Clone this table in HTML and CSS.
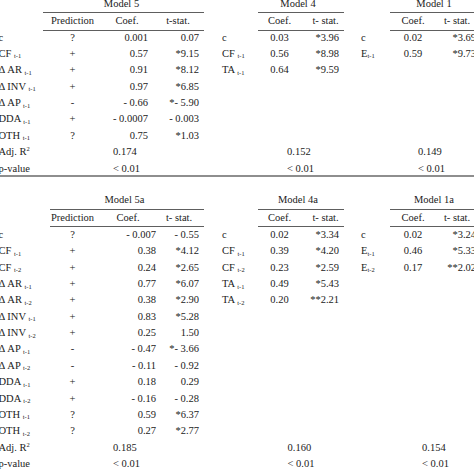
FILE: index.html
```html
<!DOCTYPE html>
<html>
<head>
<meta charset="utf-8">
<link rel="stylesheet" href="styles.css">
</head>
<body>
<div class="page">
  <div class="tbl tbl-top">
    <div class="row title">
      <div></div><div class="span3 line ttl t5">Model 5</div><div></div>
      <div></div><div class="span2 line ttl t4">Model 4</div><div></div>
      <div></div><div class="span2 line ttl t1">Model 1</div>
    </div>
    <div class="row head">
      <div></div><div class="line ctr">Prediction</div><div class="line ctr">Coef.</div><div class="line ctr">t-stat.</div><div></div>
      <div></div><div class="line ctr">Coef.</div><div class="line ctr hg">t- stat.</div><div></div>
      <div></div><div class="line ctr">Coef.</div><div class="line ctr">t- stat.</div>
    </div>
    <div class="row">
      <div class="lab">c</div><div class="ctr">?</div><div class="rc">0.001</div><div class="rt">0.07</div><div></div>
      <div>c</div><div class="ctr">0.03</div><div class="rt">*3.96</div><div></div>
      <div>c</div><div class="ctr">0.02</div><div class="rj">*3.69</div>
    </div>
    <div class="row">
      <div class="lab">CF <span class="sub">t-1</span></div><div class="ctr">+</div><div class="rc">0.57</div><div class="rt">*9.15</div><div></div>
      <div>CF <span class="sub">t-1</span></div><div class="ctr">0.56</div><div class="rt">*8.98</div><div></div>
      <div>E<span class="sub">t-1</span></div><div class="ctr">0.59</div><div class="rj">*9.73</div>
    </div>
    <div class="row">
      <div class="lab">Δ AR <span class="sub">t-1</span></div><div class="ctr">+</div><div class="rc">0.91</div><div class="rt">*8.12</div><div></div>
      <div>TA <span class="sub">t-1</span></div><div class="ctr">0.64</div><div class="rt">*9.59</div><div></div>
      <div></div><div></div><div></div>
    </div>
    <div class="row">
      <div class="lab">Δ INV <span class="sub">t-1</span></div><div class="ctr">+</div><div class="rc">0.97</div><div class="rt">*6.85</div>
    </div>
    <div class="row">
      <div class="lab">Δ AP <span class="sub">t-1</span></div><div class="ctr">-</div><div class="rc">- 0.66</div><div class="rt">*- 5.90</div>
    </div>
    <div class="row">
      <div class="lab">DDA <span class="sub">t-1</span></div><div class="ctr">+</div><div class="rc">- 0.0007</div><div class="rt">- 0.003</div>
    </div>
    <div class="row">
      <div class="lab">OTH <span class="sub">t-1</span></div><div class="ctr">?</div><div class="rc">0.75</div><div class="rt">*1.03</div>
    </div>
    <div class="row">
      <div class="lab">Adj. R<span class="sup">2</span></div><div></div><div class="span2 s5">0.174</div><div></div>
      <div></div><div class="span2 s4">0.152</div><div></div>
      <div></div><div class="span2 s1">0.149</div>
    </div>
    <div class="row last">
      <div class="lab">p-value</div><div></div><div class="span2 s5">&lt; 0.01</div><div></div>
      <div></div><div class="span2 s4">&lt; 0.01</div><div></div>
      <div></div><div class="span2 s1">&lt; 0.01</div>
    </div>
  </div>

  <div class="tbl tbl-bottom">
    <div class="row title">
      <div></div><div class="span3 line ttl t5b">Model 5a</div><div></div>
      <div></div><div class="span2 line ttl t4">Model 4a</div><div></div>
      <div></div><div class="span2 line ttl t1">Model 1a</div>
    </div>
    <div class="row head">
      <div></div><div class="line ctr pb">Prediction</div><div class="line ctr hc">Coef.</div><div class="line ctr hc">t- stat.</div><div></div>
      <div></div><div class="line ctr">Coef.</div><div class="line ctr hg">t- stat.</div><div></div>
      <div></div><div class="line ctr">Coef.</div><div class="line ctr">t- stat.</div>
    </div>
    <div class="row">
      <div class="lab">c</div><div class="ctr">?</div><div class="rc">- 0.007</div><div class="rt">- 0.55</div><div></div>
      <div>c</div><div class="ctr">0.02</div><div class="rt">*3.34</div><div></div>
      <div>c</div><div class="ctr">0.02</div><div class="rj">*3.24</div>
    </div>
    <div class="row">
      <div class="lab">CF <span class="sub">t-1</span></div><div class="ctr">+</div><div class="rc">0.38</div><div class="rt">*4.12</div><div></div>
      <div>CF <span class="sub">t-1</span></div><div class="ctr">0.39</div><div class="rt">*4.20</div><div></div>
      <div>E<span class="sub">t-1</span></div><div class="ctr">0.46</div><div class="rj">*5.33</div>
    </div>
    <div class="row">
      <div class="lab">CF <span class="sub">t-2</span></div><div class="ctr">+</div><div class="rc">0.24</div><div class="rt">*2.65</div><div></div>
      <div>CF <span class="sub">t-2</span></div><div class="ctr">0.23</div><div class="rt">*2.59</div><div></div>
      <div>E<span class="sub">t-2</span></div><div class="ctr">0.17</div><div class="rj">**2.02</div>
    </div>
    <div class="row">
      <div class="lab">Δ AR <span class="sub">t-1</span></div><div class="ctr">+</div><div class="rc">0.77</div><div class="rt">*6.07</div><div></div>
      <div>TA <span class="sub">t-1</span></div><div class="ctr">0.49</div><div class="rt">*5.43</div>
    </div>
    <div class="row">
      <div class="lab">Δ AR <span class="sub">t-2</span></div><div class="ctr">+</div><div class="rc">0.38</div><div class="rt">*2.90</div><div></div>
      <div>TA <span class="sub">t-2</span></div><div class="ctr">0.20</div><div class="rt">**2.21</div>
    </div>
    <div class="row">
      <div class="lab">Δ INV <span class="sub">t-1</span></div><div class="ctr">+</div><div class="rc">0.83</div><div class="rt">*5.28</div>
    </div>
    <div class="row">
      <div class="lab">Δ INV <span class="sub">t-2</span></div><div class="ctr">+</div><div class="rc">0.25</div><div class="rt">1.50</div>
    </div>
    <div class="row">
      <div class="lab">Δ AP <span class="sub">t-1</span></div><div class="ctr">-</div><div class="rc">- 0.47</div><div class="rt">*- 3.66</div>
    </div>
    <div class="row">
      <div class="lab">Δ AP <span class="sub">t-2</span></div><div class="ctr">-</div><div class="rc">- 0.11</div><div class="rt">- 0.92</div>
    </div>
    <div class="row">
      <div class="lab">DDA <span class="sub">t-1</span></div><div class="ctr">+</div><div class="rc">0.18</div><div class="rt">0.29</div>
    </div>
    <div class="row">
      <div class="lab">DDA <span class="sub">t-2</span></div><div class="ctr">+</div><div class="rc">- 0.16</div><div class="rt">- 0.28</div>
    </div>
    <div class="row">
      <div class="lab">OTH <span class="sub">t-1</span></div><div class="ctr">?</div><div class="rc">0.59</div><div class="rt">*6.37</div>
    </div>
    <div class="row">
      <div class="lab">OTH <span class="sub">t-2</span></div><div class="ctr">?</div><div class="rc">0.27</div><div class="rt">*2.77</div>
    </div>
    <div class="row">
      <div class="lab">Adj. R<span class="sup">2</span></div><div></div><div class="span2 s5">0.185</div><div></div>
      <div></div><div class="span2 s4b">0.160</div><div></div>
      <div></div><div class="span2 s1b">0.154</div>
    </div>
    <div class="row">
      <div class="lab">p-value</div><div></div><div class="span2 s5">&lt; 0.01</div><div></div>
      <div></div><div class="span2 s4b">&lt; 0.01</div><div></div>
      <div></div><div class="span2 s1b">&lt; 0.01</div>
    </div>
  </div>
</div>
</body>
</html>
```

FILE: styles.css
```css
html, body {
  margin: 0;
  padding: 0;
  background: #ffffff;
}

body {
  color: #222222;
  font-family: "Liberation Serif", "Times New Roman", serif;
  font-size: 10.5px;
}

.page {
  width: 474px;
  height: 470px;
  overflow: hidden;
}

.tbl {
  margin-left: -3px;
  width: 481px;
}

.tbl-top {
  margin-top: -4.3px;
  border-bottom: 2px solid #8e8e8e;
}

.tbl-bottom {
  margin-top: 15.15px;
}

.row {
  display: grid;
  grid-template-columns: 46px 59px 50px 52px 18px 36px 43px 43px 17px 29px 46px 42px;
  height: 16.4px;
  line-height: 16.4px;
  white-space: nowrap;
}

.tbl-bottom .row {
  grid-template-columns: 46px 59px 58px 44px 18px 36px 43px 43px 17px 29px 46px 42px;
  height: 16.36px;
  line-height: 16.36px;
}

.row > div {
  box-sizing: border-box;
}

.tbl .row.title {
  height: 17.5px;
  line-height: 16.4px;
}

.tbl .row.head {
  height: 16.3px;
  line-height: 16.4px;
}

.tbl-bottom .row.head {
  height: 17.4px;
}

.row.last {
  height: 14.3px;
}

.line {
  border-bottom: 1px solid #5e5e5e;
}

.span2 { grid-column: span 2; }
.span3 { grid-column: span 3; }

.ttl { text-align: center; }
.t5 { padding-right: 4px; }
.t5b { margin-left: 7px; padding-right: 5px; }
.t4 { padding-right: 6px; }
.t1 { padding-left: 0; }

.ctr { text-align: center; }
.hg { padding-left: 6px; }
.hc { padding-right: 6px; }
.pb { margin-left: 7px; padding-right: 7px; }

.lab { padding-left: 1.5px; }

.rc { text-align: right; padding-right: 4px; }
.rt { text-align: right; padding-right: 5px; }
.rj { text-align: right; padding-right: 2px; }

.s5 { padding-left: 11px; }
.s4 { padding-left: 29px; }
.s1 { padding-left: 28px; }
.s4b { padding-left: 29.5px; }
.s1b { padding-left: 32px; }

.sub {
  font-size: 6.5px;
  position: relative;
  top: 1.5px;
}

.sup {
  font-size: 6.5px;
  vertical-align: 4px;
  line-height: 0;
}
```
